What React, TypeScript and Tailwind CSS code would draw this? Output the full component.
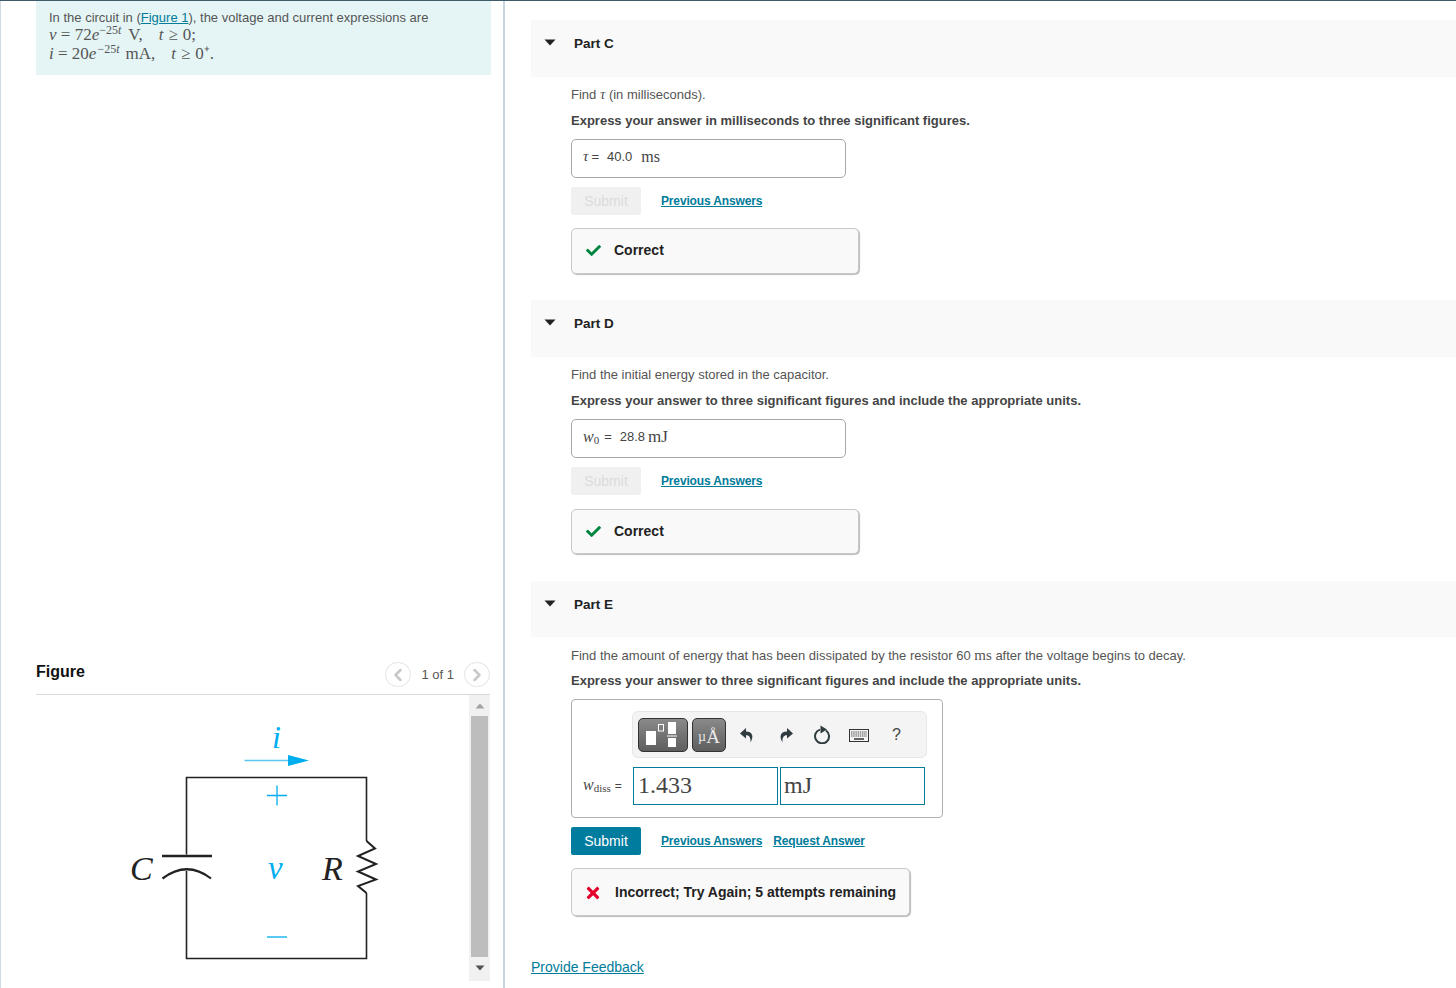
import React from "react";
import { ChevronLeft, ChevronRight } from "lucide-react";
import { FaCheck, FaTimes } from "react-icons/fa";

const serif = "font-['Liberation_Serif',serif]";

function Header({ label, h }: { label: string; h: string }) {
  return (
    <div className={`flex ${h} bg-[#f9f9f9] pt-[15px]`}>
      <svg className="ml-[13px] mt-[4px] h-[7px] w-[12px]" viewBox="0 0 12 7">
        <path d="M0.5 0.5H11.5L6 6.5Z" fill="#222" />
      </svg>
      <span className="ml-[18px] text-[13.5px] leading-[18px] font-bold text-[#222]">{label}</span>
    </div>
  );
}

function SubmitRow({ active, request }: { active?: boolean; request?: boolean }) {
  return (
    <div className="ml-[40px] flex h-[28px] items-start">
      <button
        className={`h-[28px] w-[70px] rounded-[2px] text-[14px] ${active ? "bg-[#007c9f] text-white" : "bg-[#f0f0f0] text-[#dcdcdc]"}`}
      >
        Submit
      </button>
      <div className="ml-[20px] mt-[7px] flex gap-[11px] text-[12px] leading-[14px] font-bold tracking-[-0.15px]">
        <a className="text-[#007c9b] underline">Previous Answers</a>
        {request && <a className="text-[#007c9b] underline">Request Answer</a>}
      </div>
    </div>
  );
}

function Feedback({ ok, text, w, h, pad }: { ok: boolean; text: string; w: string; h: string; pad: string }) {
  return (
    <div
      className={`ml-[40px] flex ${w} ${h} ${pad} items-center rounded-[5px] border border-[#c8c8c8] bg-[#f9f9f9] pl-[14px] text-[14px] font-bold text-[#222] shadow-[1px_1px_1px_#bbb]`}
    >
      {ok ? <FaCheck className="h-[15px] w-[15px] text-[#008540]" /> : <FaTimes className="-ml-[1px] h-[18px] w-[16px] text-[#e4002b]" />}
      <span className={ok ? "ml-[13px]" : "ml-[14px]"}>{text}</span>
    </div>
  );
}

function Answered({ children }: { children: React.ReactNode }) {
  return (
    <div className="ml-[40px] mt-[11px] flex h-[39px] w-[275px] items-center rounded-[5px] border border-[#a8a8a8] pb-[4px] pl-[11px] text-[13px] text-[#444]">
      {children}
    </div>
  );
}

function Toolbar() {
  return (
    <div className="ml-[60px] flex h-[47px] w-[295px] items-center rounded-[6px] border border-[#e6e6e6] bg-[#f4f4f4] pl-[5px]">
      <div className="flex h-[34px] w-[50px] items-center justify-center rounded-[5px] border border-[#333] bg-gradient-to-b from-[#8a8a8a] to-[#5e5e5e]">
        <svg width="36" height="28" viewBox="0 0 36 28">
          <rect x="1" y="10" width="10" height="14" fill="#fff" />
          <rect x="13.5" y="3.5" width="5" height="6.5" fill="none" stroke="#fff" />
          <rect x="23" y="1" width="8" height="12" fill="#fff" />
          <rect x="22" y="14.5" width="10" height="1" fill="#fff" />
          <rect x="23" y="17" width="8" height="9" fill="#fff" />
        </svg>
      </div>
      <div className={`ml-[4px] flex h-[34px] w-[34px] items-end justify-center rounded-[5px] border border-[#333] bg-gradient-to-b from-[#8a8a8a] to-[#5e5e5e] pb-[4px] leading-[20px] text-[#e8e8e8] ${serif}`}>
        <span className="text-[14px]">µ</span>
        <span className="text-[19px]">Å</span>
      </div>
      <svg className="ml-[14px]" width="14" height="16" viewBox="0 0 14 16">
        <path d="M6 1L0 6.5L6 11.5V8.2C9 8 11 10 10.5 15.5C13.5 10.5 13.5 4.5 6 4.5Z" fill="#2f3b3f" />
      </svg>
      <svg className="ml-[25px]" width="14" height="16" viewBox="0 0 14 16">
        <path d="M8 1L14 6.5L8 11.5V8.2C5 8 3 10 3.5 15.5C0.5 10.5 0.5 4.5 8 4.5Z" fill="#2f3b3f" />
      </svg>
      <svg className="ml-[21px]" width="17" height="19" viewBox="0 0 17 19" fill="none">
        <path d="M12 5.5A7 7 0 1 1 6 4.6" stroke="#2f3b3f" strokeWidth="2" />
        <path d="M6.5 0.5L13 4.5L6.5 8.5Z" fill="#2f3b3f" />
      </svg>
      <svg className="ml-[18px] mt-[2px]" width="20" height="13" viewBox="0 0 20 13">
        <rect x="0.5" y="0.5" width="19" height="12" fill="#f4f4f4" stroke="#333" />
        <path d="M2 3H18M2 5H18M2 7H18" stroke="#555" strokeDasharray="1.5 0.7" />
        <path d="M5 10H15" stroke="#333" strokeWidth="1.5" />
      </svg>
      <span className="ml-[23px] text-[16px] text-[#444]">?</span>
    </div>
  );
}

function Circuit() {
  const sf = "'Liberation Serif', serif";
  return (
    <svg className="h-[286px] w-[433px]" viewBox="36 695 433 286">
      <g fill="none" stroke="#222" strokeWidth="1.6">
        <path d="M186.5 854.5V777.5H366.5V841M186.5 871V958.5H366.5V893" />
        <path d="M366.5 841L375 848.5L358 856L376 864L358 871.5L376 879.5L358 886L366.5 893" strokeWidth="2" />
        <path d="M162 856H212" strokeWidth="2.4" />
        <path d="M162.5 878.5Q187 860 211 878.5" strokeWidth="2.2" />
      </g>
      <text x="130" y="880" fontFamily={sf} fontStyle="italic" fontSize="34" fill="#222">C</text>
      <text x="322" y="880" fontFamily={sf} fontStyle="italic" fontSize="34" fill="#222">R</text>
      <text x="272" y="748" fontFamily={sf} fontStyle="italic" fontSize="32" fill="#00aeef">i</text>
      <text x="268" y="879" fontFamily={sf} fontStyle="italic" fontSize="33" fill="#00aeef">v</text>
      <path d="M244.5 760.5H290" stroke="#5cc6ee" strokeWidth="1.6" />
      <path d="M288 755L309 760.5L288 766Z" fill="#00aeef" />
      <path d="M277 785.5V805.5M267 795.5H287" stroke="#00aeef" strokeWidth="1.3" fill="none" />
      <path d="M267 937H287" stroke="#00aeef" strokeWidth="1.3" />
    </svg>
  );
}

export default function App() {
  return (
    <div className="flex h-[988px] w-[1456px] overflow-hidden border-t border-[#3f5a68] bg-white font-['Liberation_Sans',Arial,sans-serif]">
      <div className="flex w-[505px] shrink-0 flex-col border-r-2 border-l border-r-[#c5d5e2] border-l-[#d2dbe2] pl-[35px]">
        <div className="h-[74px] w-[455px] bg-[#e5f5f5] pl-[13px] pt-[9px] text-[#555]">
          <p className="text-[13px] leading-[16px]">
            In the circuit in (<a className="text-[#007c9b] underline">Figure 1</a>), the voltage and current expressions are
          </p>
          <p className={`${serif} text-[17px] leading-[18px] whitespace-pre`}>
            <i>v</i> = 72<i>e</i>
            <sup className="text-[12px]">−25<i>t</i></sup>
            <span className="ml-[7px]">V,</span>
            <i className="ml-[16px]">t</i>
            <span className="ml-[5px]">≥</span>
            <span className="ml-[5px]">0;</span>
          </p>
          <p className={`${serif} text-[17px] leading-[19px] whitespace-pre`}>
            <i>i</i> = 20<i>e</i>
            <sup className="ml-[1px] text-[12px]">−25<i>t</i></sup>
            <span className="ml-[6px]">mA,</span>
            <i className="ml-[16px]">t</i>
            <span className="ml-[5px]">≥</span>
            <span className="ml-[5px]">0⁺.</span>
          </p>
        </div>
        <div className="mt-[585px] flex h-[35px] w-[454px] items-start border-b border-[#d9d9d9]">
          <span className="mt-[1px] text-[16px] leading-[22px] font-bold text-[#111]">Figure</span>
          <div className="ml-auto mt-[2px] flex items-center text-[13px] text-[#555]">
            <span className="flex h-[25px] w-[26px] items-center justify-center rounded-full border border-[#e3e3e3]">
              <ChevronLeft className="h-[20px] w-[20px] text-[#c8c8c8]" strokeWidth={3} />
            </span>
            <span className="mx-[10px]">1 of 1</span>
            <span className="flex h-[25px] w-[26px] items-center justify-center rounded-full border border-[#e3e3e3]">
              <ChevronRight className="h-[20px] w-[20px] text-[#c8c8c8]" strokeWidth={3} />
            </span>
          </div>
        </div>
        <div className="flex w-[454px]">
          <Circuit />
          <div className="flex h-[286px] w-[21px] flex-col items-center bg-[#f1f1f1]">
            <svg className="mt-[8px]" width="10" height="6" viewBox="0 0 10 6"><path d="M0.5 5.5H9.5L5 0.5Z" fill="#a3a3a3" /></svg>
            <div className="mt-[7px] h-[241px] w-[17px] bg-[#bdbdbd]" />
            <svg className="mt-[8px]" width="10" height="6" viewBox="0 0 10 6"><path d="M0.5 0.5H9.5L5 5.5Z" fill="#505050" /></svg>
          </div>
        </div>
      </div>

      <div className="ml-[26px] flex-1 pt-[19px] text-[#444]">
        <Header label="Part C" h="h-[57px]" />
        <p className="ml-[40px] mt-[10px] text-[13px] leading-[15px] text-[#555]">
          Find <i className={`${serif} text-[15px]`}>τ</i> (in milliseconds).
        </p>
        <p className="ml-[40px] mt-[11px] text-[13px] leading-[15px] font-bold">Express your answer in milliseconds to three significant figures.</p>
        <Answered>
          <i className={`${serif} text-[15px]`}>τ</i><span className="ml-[3px]">=</span>
          <span className="ml-[8px]">40.0</span>
          <span className={`ml-[9px] ${serif} text-[16px]`}>ms</span>
        </Answered>
        <div className="mt-[9px]"><SubmitRow /></div>
        <div className="mt-[13px]"><Feedback ok text="Correct" w="w-[288px]" h="h-[46px]" pad="pb-[2px]" /></div>

        <div className="mt-[26px]"><Header label="Part D" h="h-[57px]" /></div>
        <p className="ml-[40px] mt-[10px] text-[13px] leading-[15px] text-[#555]">Find the initial energy stored in the capacitor.</p>
        <p className="ml-[40px] mt-[11px] text-[13px] leading-[15px] font-bold">Express your answer to three significant figures and include the appropriate units.</p>
        <Answered>
          <span className={`${serif} text-[16px]`}><i>w</i><sub className="text-[11px]">0</sub></span>
          <span className="ml-[5px]">=</span>
          <span className="ml-[8px]">28.8</span>
          <span className={`ml-[3px] ${serif} text-[17px]`}>mJ</span>
        </Answered>
        <div className="mt-[9px]"><SubmitRow /></div>
        <div className="mt-[14px]"><Feedback ok text="Correct" w="w-[288px]" h="h-[45px]" pad="pb-0" /></div>

        <div className="mt-[27px]"><Header label="Part E" h="h-[56px]" /></div>
        <p className="ml-[40px] mt-[11px] text-[13px] leading-[15px] text-[#555]">
          Find the amount of energy that has been dissipated by the resistor 60 <span className={`${serif} text-[15px]`}>ms</span> after the voltage begins to decay.
        </p>
        <p className="ml-[40px] mt-[10px] text-[13px] leading-[15px] font-bold">Express your answer to three significant figures and include the appropriate units.</p>
        <div className="ml-[40px] mt-[11px] h-[119px] w-[372px] rounded-[4px] border border-[#b0b0b0] pt-[11px]">
          <Toolbar />
          <div className="mt-[9px] flex items-center">
            <span className={`ml-[11px] mb-[3px] w-[50px] whitespace-nowrap ${serif} text-[16px] text-[#444]`}>
              <i>w</i><sub className="text-[11px]">diss</sub><span className="ml-[4px] font-['Liberation_Sans'] text-[12px]">=</span>
            </span>
            <div className={`flex h-[38px] w-[145px] items-center border border-[#007c9b] pb-[2px] pl-[4px] text-[24px] text-[#444] ${serif}`}>1.433</div>
            <div className={`ml-[2px] flex h-[38px] w-[145px] items-center border border-[#007c9b] pb-[2px] pl-[3px] text-[24px] text-[#444] ${serif}`}>mJ</div>
          </div>
        </div>
        <div className="mt-[9px]"><SubmitRow active request /></div>
        <div className="mt-[13px]"><Feedback ok={false} text="Incorrect; Try Again; 5 attempts remaining" w="w-[339px]" h="h-[48px]" pad="pt-[1px]" /></div>
        <a className="mt-[43px] block text-[14px] leading-[16px] text-[#007c9b] underline">Provide Feedback</a>
      </div>
    </div>
  );
}
